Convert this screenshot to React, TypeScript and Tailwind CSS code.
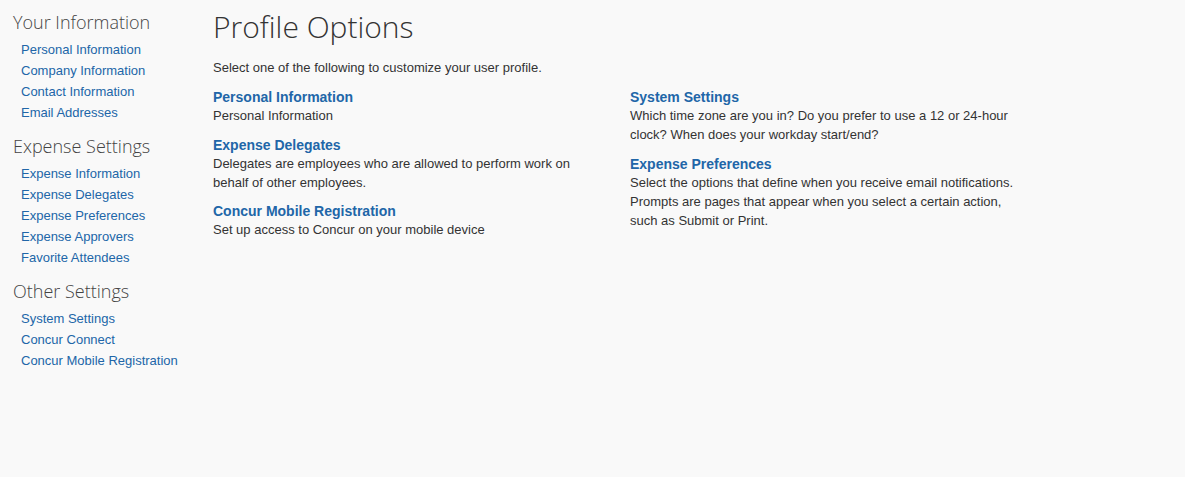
const sections = [
  {
    title: "Your Information",
    links: ["Personal Information", "Company Information", "Contact Information", "Email Addresses"],
  },
  {
    title: "Expense Settings",
    links: ["Expense Information", "Expense Delegates", "Expense Preferences", "Expense Approvers", "Favorite Attendees"],
  },
  {
    title: "Other Settings",
    links: ["System Settings", "Concur Connect", "Concur Mobile Registration"],
  },
];

const left = [
  { title: "Personal Information", desc: "Personal Information" },
  { title: "Expense Delegates", desc: "Delegates are employees who are allowed to perform work on behalf of other employees." },
  { title: "Concur Mobile Registration", desc: "Set up access to Concur on your mobile device" },
];

const right = [
  { title: "System Settings", desc: "Which time zone are you in? Do you prefer to use a 12 or 24-hour clock? When does your workday start/end?" },
  {
    title: "Expense Preferences",
    desc: "Select the options that define when you receive email notifications. Prompts are pages that appear when you select a certain action, such as Submit or Print.",
  },
];

function Option({ title, desc }: { title: string; desc: string }) {
  return (
    <div className="mb-[10.5px]">
      <a href="#" className="block text-[14px] font-bold leading-[18px] text-[#2166a8]">
        {title}
      </a>
      <p className="text-[13px] leading-[19px] text-[#333]">{desc}</p>
    </div>
  );
}

export default function App() {
  return (
    <div className="flex min-h-[477px] bg-[#f9f9f9] font-['Liberation_Sans',Arial,sans-serif]">
      <aside className="w-[213px] shrink-0 pl-[13px] pt-[10px]">
        {sections.map((s) => (
          <div key={s.title} className="mb-[11px]">
            <h2 className="font-['Open_Sans',sans-serif] text-[18px] font-light leading-[25px] text-[#444]">{s.title}</h2>
            <ul className="pl-[8px] pt-[4px]">
              {s.links.map((l) => (
                <li key={l} className="text-[13px] leading-[21px]">
                  <a href="#" className="text-[#2166a8]">
                    {l}
                  </a>
                </li>
              ))}
            </ul>
          </div>
        ))}
      </aside>
      <main className="pt-[6px]">
        <h1 className="font-['Open_Sans',sans-serif] text-[30px] font-light leading-[42px] text-[#333]">Profile Options</h1>
        <p className="mt-[11px] text-[13px] leading-[18px] text-[#333]">Select one of the following to customize your user profile.</p>
        <div className="mt-[11px] grid grid-cols-[417px_400px]">
          <div className="pr-[45px]">
            {left.map((o) => (
              <Option key={o.title} {...o} />
            ))}
          </div>
          <div className="pr-[8px]">
            {right.map((o) => (
              <Option key={o.title} {...o} />
            ))}
          </div>
        </div>
      </main>
    </div>
  );
}
